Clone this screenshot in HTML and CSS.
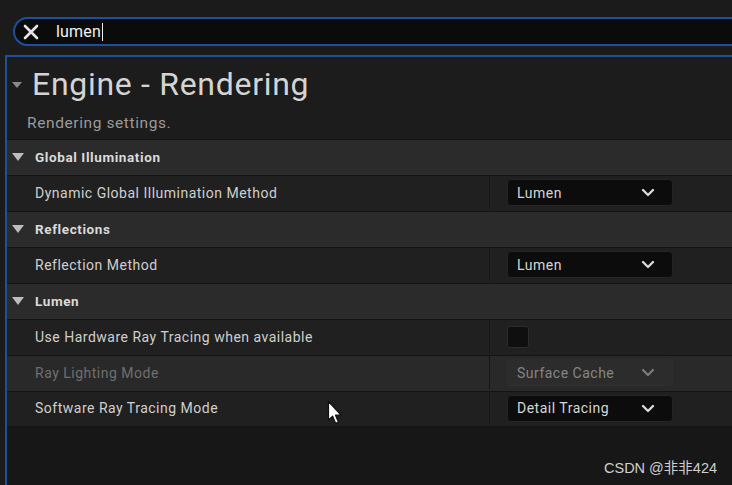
FILE: index.html
```html
<!DOCTYPE html>
<html>
<head>
<meta charset="utf-8">
<link rel="stylesheet" href="styles.css">
</head>
<body>
<div class="top">
  <div class="search">
    <svg class="xicon" width="18" height="18" viewBox="0 0 18 18"><path d="M3 3 L15 15 M15 3 L3 15" stroke="#e6e6e6" stroke-width="2.6" stroke-linecap="round"/></svg>
    <span class="query">lumen</span><span class="caret"></span>
  </div>
</div>
<div class="panel">
  <div class="title-area">
    <div class="title-row">
      <span class="tri-big"></span>
      <span class="title">Engine - Rendering</span>
    </div>
    <div class="desc">Rendering settings.</div>
  </div>

  <div class="row header"><span class="tri"></span><span class="htext">Global Illumination</span></div>
  <div class="row prop">
    <div class="label">Dynamic Global Illumination Method</div>
    <div class="value"><div class="combo"><span>Lumen</span><svg class="chev" width="14" height="9" viewBox="0 0 14 9"><path d="M2 2 L7 7 L12 2" fill="none" stroke="#d8d8d8" stroke-width="2.4" stroke-linecap="round" stroke-linejoin="round"/></svg></div></div>
  </div>

  <div class="row header"><span class="tri"></span><span class="htext">Reflections</span></div>
  <div class="row prop">
    <div class="label">Reflection Method</div>
    <div class="value"><div class="combo"><span>Lumen</span><svg class="chev" width="14" height="9" viewBox="0 0 14 9"><path d="M2 2 L7 7 L12 2" fill="none" stroke="#d8d8d8" stroke-width="2.4" stroke-linecap="round" stroke-linejoin="round"/></svg></div></div>
  </div>

  <div class="row header"><span class="tri"></span><span class="htext">Lumen</span></div>
  <div class="row prop">
    <div class="label">Use Hardware Ray Tracing when available</div>
    <div class="value"><div class="check"></div></div>
  </div>
  <div class="row prop disabled">
    <div class="label">Ray Lighting Mode</div>
    <div class="value"><div class="combo ghost"><span>Surface Cache</span><svg class="chev" width="14" height="9" viewBox="0 0 14 9"><path d="M2 2 L7 7 L12 2" fill="none" stroke="#7c7c7c" stroke-width="2.2" stroke-linecap="round" stroke-linejoin="round"/></svg></div></div>
  </div>
  <div class="row prop last">
    <div class="label">Software Ray Tracing Mode</div>
    <div class="value"><div class="combo"><span>Detail Tracing</span><svg class="chev" width="14" height="9" viewBox="0 0 14 9"><path d="M2 2 L7 7 L12 2" fill="none" stroke="#d8d8d8" stroke-width="2.4" stroke-linecap="round" stroke-linejoin="round"/></svg></div></div>
  </div>
  <div class="rest"></div>
</div>
<svg class="cursor" width="16" height="26" viewBox="0 0 16 26"><path d="M1.5 1.5 L1.5 20 L5.6 16.2 L8.6 23.2 L11.4 22 L8.5 15.2 L14 15 Z" fill="#ffffff" stroke="#111" stroke-width="1.2" stroke-linejoin="round"/></svg>
<div class="watermark">CSDN @非非424</div>
</body>
</html>
```

FILE: styles.css
```css
html, body {
  margin: 0;
  padding: 0;
  width: 732px;
  height: 485px;
  overflow: hidden;
  background: #1b1b1b;
  font-family: Roboto, "Noto Sans", sans-serif;
  position: relative;
}
.top {
  padding-top: 17px;
  padding-left: 13px;
  height: 29px;
  overflow: hidden;
}
.search {
  box-sizing: border-box;
  height: 29px;
  width: 719px;
  border: 2px solid #1f4f9a;
  border-right: none;
  border-radius: 15px 0 0 15px;
  background: #0b0b0b;
  display: flex;
  align-items: center;
  padding-left: 7px;
}
.xicon { flex: none; }
.query {
  margin-left: 16px;
  color: #f2f2f2;
  font-size: 16px;
  line-height: 20px;
  letter-spacing: 0.2px;
}
.caret {
  display: inline-block;
  width: 1px;
  height: 18px;
  background: #f2f2f2;
  margin-left: 1px;
}
.panel {
  margin-top: 9px;
  margin-left: 5px;
  border-top: 2px solid #1f4f9a;
  border-left: 2px solid #1f4f9a;
  background: #1c1c1c;
  height: 428px;
  overflow: hidden;
}
.title-area {
  height: 82px;
  box-sizing: border-box;
  padding-top: 8px;
}
.title-row {
  display: flex;
  align-items: center;
  height: 38px;
}
.tri-big {
  width: 0;
  height: 0;
  border-left: 5px solid transparent;
  border-right: 5px solid transparent;
  border-top: 6px solid #8a8a8a;
  margin-left: 5px;
  margin-right: 10px;
  margin-top: 2px;
}
.title {
  color: #d4d4d4;
  font-size: 32px;
  line-height: 38px;
  letter-spacing: 0.7px;
}
.desc {
  margin-top: 11px;
  padding-left: 20px;
  color: #9a9a9a;
  font-size: 15.5px;
  line-height: 18px;
  letter-spacing: 0.6px;
}
.row {
  height: 36px;
  box-sizing: border-box;
  border-top: 1px solid #141414;
  display: flex;
  align-items: center;
  padding-bottom: 2px;
}
.header {
  background: #2b2b2b;
}
.tri {
  width: 0;
  height: 0;
  border-left: 6px solid transparent;
  border-right: 6px solid transparent;
  border-top: 8px solid #bdbdbd;
  margin-left: 5px;
  margin-right: 11px;
}
.htext {
  color: #dadada;
  font-size: 13.5px;
  font-weight: bold;
  letter-spacing: 0.6px;
}
.prop {
  background: #202020;
}
.label {
  width: 483px;
  box-sizing: border-box;
  padding-left: 28px;
  color: #cfcfcf;
  font-size: 14px;
  letter-spacing: 0.5px;
  height: 100%;
  display: flex;
  align-items: center;
  border-right: 1px solid #161616;
}
.value {
  flex: 1;
  padding-left: 17px;
  display: flex;
  align-items: center;
  height: 100%;
}
.combo {
  box-sizing: border-box;
  flex: none;
  width: 166px;
  height: 27px;
  background: #0c0c0c;
  border: 1px solid #242424;
  border-radius: 4px;
  display: flex;
  align-items: center;
  justify-content: space-between;
  padding-left: 9px;
  padding-right: 17px;
  color: #d6d6d6;
  font-size: 14px;
  letter-spacing: 0.5px;
}
.check {
  width: 22px;
  height: 22px;
  box-sizing: border-box;
  background: #0f0f0f;
  border: 1px solid #2c2c2c;
  border-radius: 3px;
}
.disabled {
  background: #292929;
}
.disabled .label {
  color: #6f6f6f;
}
.combo.ghost {
  background: #2c2c2c;
  border-color: #2e2e2e;
  color: #858585;
}
.last {
  border-bottom: 1px solid #141414;
}
.rest {
  background: #171717;
  height: 100px;
}
.cursor {
  position: absolute;
  left: 327px;
  top: 400px;
}
.watermark {
  position: absolute;
  left: 604px;
  top: 459px;
  color: #cfcfcf;
  font-family: "Liberation Sans", "Noto Sans CJK SC", sans-serif;
  font-size: 14.5px;
  line-height: 18px;
}
```
